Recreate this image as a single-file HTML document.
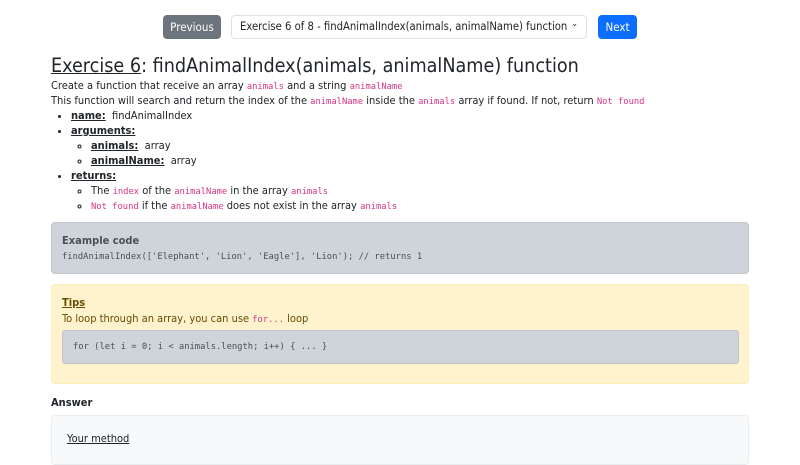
<!DOCTYPE html>
<html><head><meta charset="utf-8"><style>
*{box-sizing:border-box}
body{margin:0;font-family:"DejaVu Sans Condensed","DejaVu Sans","Liberation Sans",sans-serif;font-stretch:semi-condensed;font-size:11px;line-height:15px;color:#212529;background:#fff;width:800px;height:450px;overflow:hidden}
.nav{position:absolute;top:15px;left:0;width:800px;height:24px}
.btn{position:absolute;top:0;height:24px;border-radius:4px;color:#fff;font-size:11.5px;line-height:24px;text-align:center}
.sel{position:absolute;top:0;left:231px;width:356px;height:24px;border:1px solid #dee2e6;border-radius:4px;font-size:11.2px;line-height:22px;padding-left:8px;white-space:nowrap;overflow:hidden}
code{font-family:"DejaVu Sans Mono","Liberation Mono",monospace;font-size:8.8px;line-height:10px;color:#d63384}
.wrap{position:absolute;left:51px;width:698px}
h1{font-weight:400;font-size:19.6px;line-height:24px;margin:0}
ul{margin:0;padding-left:20px}
li{line-height:15px}
ul ul{list-style:circle}
b{text-decoration:underline}
.box{position:absolute;left:51px;width:698px;border-radius:4px}
.mono{font-family:"DejaVu Sans Mono","Liberation Mono",monospace;font-size:8.8px}
</style></head><body>
<div class="nav">
<div class="btn" style="left:163px;width:58px;background:#6c757d">Previous</div>
<div class="sel">Exercise 6 of 8 - findAnimalIndex(animals, animalName) function <span style="position:absolute;right:8px;top:-3px;font-size:9px;background:#fff">&#8964;</span></div>
<div class="btn" style="left:598px;width:39px;background:#0d6efd">Next</div>
</div>
<div class="wrap" style="top:54px">
<h1><u>Exercise 6</u>: findAnimalIndex(animals, animalName) function</h1>
<div>Create a function that receive an array <code>animals</code> and a string <code>animalName</code></div>
<div>This function will search and return the index of the <code>animalName</code> inside the <code>animals</code> array if found. If not, return <code>Not found</code></div>
<ul>
<li><b>name:</b>&nbsp; findAnimalIndex</li>
<li><b>arguments:</b><ul><li><b>animals:</b>&nbsp; array</li><li><b>animalName:</b>&nbsp; array</li></ul></li>
<li><b>returns:</b><ul><li>The <code>index</code> of the <code>animalName</code> in the array <code>animals</code></li><li><code>Not found</code> if the <code>animalName</code> does not exist in the array <code>animals</code></li></ul></li>
</ul>
</div>
<div class="box" style="top:222px;height:52px;background:#ced4da;border:1px solid #c3c8ce;padding:10px;color:#495057">
<div style="font-weight:bold;font-size:11px">Example code</div>
<div class="mono" style="margin-top:2px">findAnimalIndex(['Elephant', 'Lion', 'Eagle'], 'Lion'); // returns 1</div>
</div>
<div class="box" style="top:284px;height:100px;background:#fff3cd;border:1px solid #ffecb5;padding:10px;color:#664d03">
<div style="font-weight:bold;text-decoration:underline">Tips</div>
<div style="margin-top:1px">To loop through an array, you can use <code>for...</code> loop</div>
<div style="position:absolute;left:10px;top:45px;width:677px;height:34px;background:#ced4da;border:1px solid #bfc4ca;border-radius:3px;padding:0 10px;line-height:32px;color:#495057" class="mono">for (let i = 0; i &lt; animals.length; i++) { ... }</div>
</div>
<div class="wrap" style="top:395px;font-weight:bold">Answer</div>
<div class="box" style="top:415px;height:50px;background:#f8f9fa;border:1px solid #e9ecef;padding:15px 15px"><u>Your method</u></div>
</body></html>
